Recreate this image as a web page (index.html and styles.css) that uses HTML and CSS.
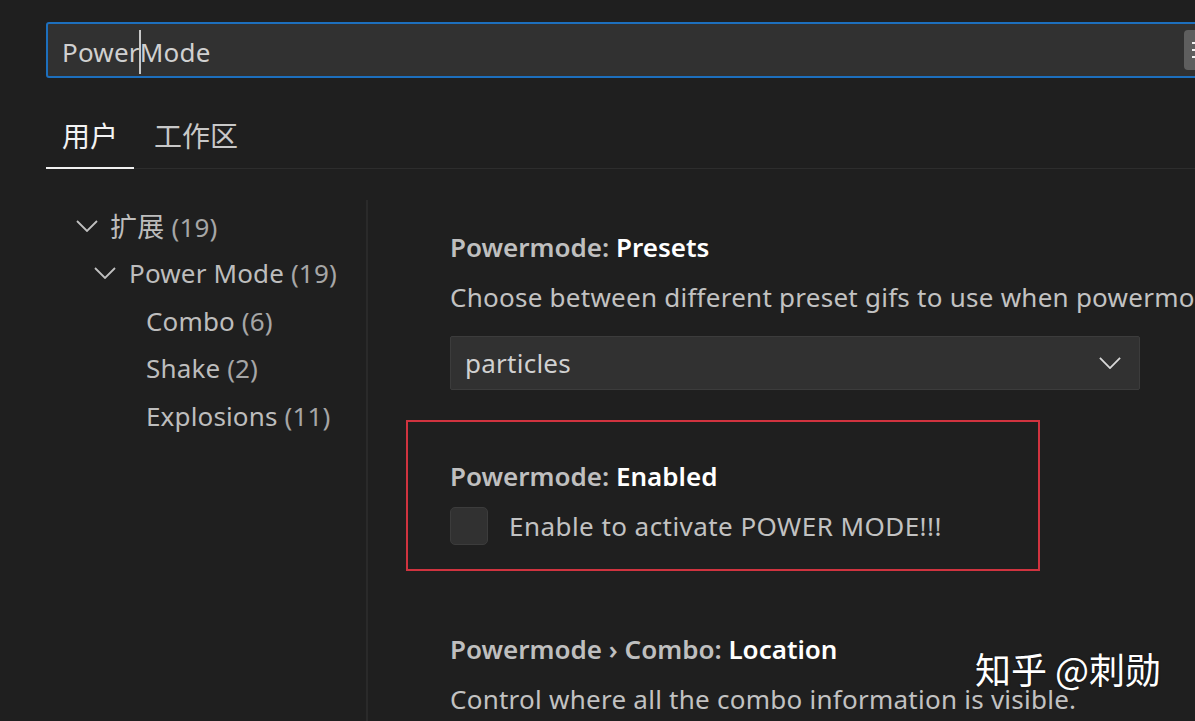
FILE: index.html
```html
<!DOCTYPE html>
<html lang="zh-CN">
<head>
<meta charset="utf-8">
<title>Settings</title>
<link rel="stylesheet" href="styles.css">
</head>
<body>
<div class="page">
  <div class="search">
    <span class="search-text">Power<span class="caret"></span>Mode</span>
    <span class="filter-btn">
      <span class="bar"></span><span class="bar"></span><span class="bar"></span>
    </span>
  </div>

  <div class="tabs">
    <div class="tab active">用户</div>
    <div class="tab">工作区</div>
  </div>

  <div class="main">
    <nav class="tree">
      <div class="row lvl1">
        <svg class="chev" viewBox="0 0 22 12"><path d="M1 1 L11 11 L21 1" fill="none" stroke="#c0c0c0" stroke-width="1.8"/></svg>
        <span class="label">扩展 <span class="count">(19)</span></span>
      </div>
      <div class="row lvl2">
        <svg class="chev" viewBox="0 0 22 12"><path d="M1 1 L11 11 L21 1" fill="none" stroke="#c0c0c0" stroke-width="1.8"/></svg>
        <span class="label">Power Mode <span class="count">(19)</span></span>
      </div>
      <div class="row lvl3"><span class="label">Combo <span class="count">(6)</span></span></div>
      <div class="row lvl3"><span class="label">Shake <span class="count">(2)</span></span></div>
      <div class="row lvl3"><span class="label">Explosions <span class="count">(11)</span></span></div>
    </nav>

    <section class="settings">
      <div class="setting">
        <div class="title"><span class="cat">Powermode: </span><span class="key">Presets</span></div>
        <div class="desc">Choose between different preset gifs to use when powermode is activated.</div>
        <div class="select">
          <span>particles</span>
          <svg class="select-chev" viewBox="0 0 24 13"><path d="M1 1 L12 12 L23 1" fill="none" stroke="#d8d8d8" stroke-width="2"/></svg>
        </div>
      </div>

      <div class="setting highlighted">
        <div class="title"><span class="cat">Powermode: </span><span class="key">Enabled</span></div>
        <label class="check-row">
          <span class="checkbox"></span>
          <span class="check-label">Enable to activate POWER MODE!!!</span>
        </label>
      </div>

      <div class="setting third">
        <div class="title"><span class="cat">Powermode › Combo: </span><span class="key">Location</span></div>
        <div class="desc">Control where all the combo information is visible.</div>
      </div>
    </section>
  </div>

  <div class="watermark">知乎 @刺勋</div>
</div>
</body>
</html>
```

FILE: styles.css
```css
html, body {
  margin: 0;
  padding: 0;
  background: #1f1f1f;
  overflow: hidden;
}

.page {
  position: relative;
  width: 1195px;
  height: 721px;
  overflow: hidden;
  font-family: "Noto Sans", "Noto Sans CJK SC", sans-serif;
  font-size: 26px;
  letter-spacing: 0.25px;
  color: #cccccc;
}

/* search box */
.search {
  margin: 22px 0 0 46px;
  width: 1170px;
  height: 56px;
  box-sizing: border-box;
  border: 2px solid #1d6fbd;
  border-radius: 3px;
  background: #313131;
  display: flex;
  align-items: center;
  padding: 3px 0 0 14px;
  position: relative;
}

.search-text {
  color: #d0d0d0;
  line-height: 30px;
  display: inline-flex;
  align-items: center;
  letter-spacing: 0.2px;
}

.caret {
  display: inline-block;
  width: 2px;
  height: 44px;
  background: #c8c8c8;
  margin: 0 -1px;
}

.filter-btn {
  position: absolute;
  left: 1136px;
  top: 6px;
  width: 30px;
  height: 40px;
  background: #5e5e5e;
  border-radius: 4px;
  display: flex;
  flex-direction: column;
  justify-content: center;
  gap: 5px;
  padding-left: 8px;
  box-sizing: border-box;
}

.filter-btn .bar {
  display: block;
  width: 10px;
  height: 2px;
  background: #f0f0f0;
}

/* tabs */
.tabs {
  display: flex;
  margin: 22px 0 0 46px;
  border-bottom: 1px solid #2d2d2d;
  gap: 4px;
}

.tab {
  padding: 18px 16px 15px;
  line-height: 34px;
  font-size: 28px;
  letter-spacing: 0;
  color: #c8c8c8;
  border-bottom: 2px solid transparent;
  margin-bottom: -1px;
  font-family: "Noto Sans CJK SC", sans-serif;
}

.tab.active {
  color: #f2f2f2;
  border-bottom-color: #f0f0f0;
}

/* main area */
.main {
  display: flex;
  height: 560px;
}

.tree {
  width: 322px;
  margin-left: 46px;
  padding-top: 33px;
  box-sizing: border-box;
  flex: none;
  position: relative;
}

.tree::after {
  content: "";
  position: absolute;
  right: 0;
  top: 31px;
  bottom: 0;
  width: 2px;
  background: #2a2a2a;
}

.row {
  height: 47.5px;
  display: flex;
  align-items: center;
  color: #bdbdbd;
  white-space: nowrap;
  letter-spacing: 0.15px;
}

.count {
  color: #a6a6a6;
}

.chev {
  width: 22px;
  height: 12px;
  flex: none;
  margin-right: 12px;
}

.lvl1 { padding-left: 30px; }
.lvl1 .label { font-size: 27px; }
.lvl1 .count { font-size: 26px; }
.lvl2 { padding-left: 48px; }
.lvl2 .chev { margin-right: 13px; }
.lvl3 { padding-left: 100px; }

/* settings */
.settings {
  flex: 1;
  padding: 60px 0 0 82px;
  white-space: nowrap;
}

.setting .title {
  line-height: 36px;
  font-weight: 600;
  letter-spacing: 0;
}

.cat {
  color: #bfbfbf;
}

.key {
  color: #ffffff;
}

.desc {
  margin-top: 14px;
  line-height: 36px;
  color: #c2c2c2;
}

.select {
  margin-top: 21px;
  width: 690px;
  height: 54px;
  box-sizing: border-box;
  background: #313131;
  border: 1px solid #3c3c3c;
  border-radius: 2px;
  display: flex;
  align-items: center;
  justify-content: space-between;
  padding: 0 18px 0 14px;
  color: #d0d0d0;
}

.select-chev {
  width: 22px;
  height: 12px;
}

.setting.highlighted {
  margin: 30px 0 0 -44px;
  width: 634px;
  height: 151px;
  box-sizing: border-box;
  border: 2px solid #d0333f;
  padding: 36px 0 0 42px;
}

.check-row {
  display: flex;
  align-items: center;
  margin-top: 13px;
  gap: 21px;
}

.checkbox {
  width: 38px;
  height: 38px;
  box-sizing: border-box;
  background: #313131;
  border: 1px solid #3c3c3c;
  border-radius: 5px;
  flex: none;
}

.check-label {
  color: #c2c2c2;
  letter-spacing: 0.45px;
}

.setting.third {
  margin-top: 60px;
}

.watermark {
  position: absolute;
  left: 975px;
  top: 649px;
  font-family: "Noto Sans CJK SC", sans-serif;
  font-size: 36px;
  line-height: 38px;
  letter-spacing: 0;
  color: #ffffff;
  text-shadow: 0 0 2px rgba(0,0,0,0.6);
}
```
